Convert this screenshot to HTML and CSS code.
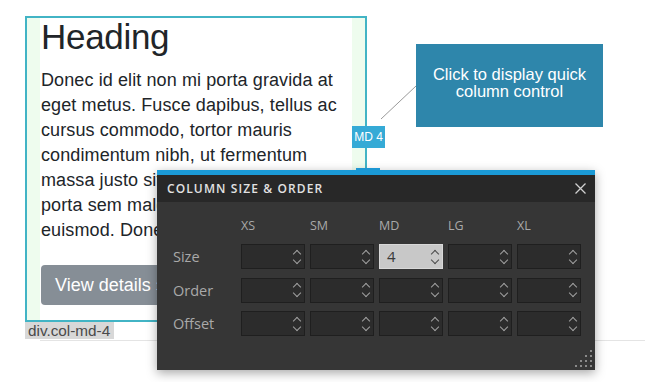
FILE: index.html
```html
<!DOCTYPE html>
<html>
<head>
<meta charset="utf-8">
<link rel="stylesheet" href="styles.css">
</head>
<body>
<div class="page">
  <div class="col">
    <div class="col-inner">
      <h2 class="heading">Heading</h2>
      <p class="text">Donec id elit non mi porta gravida at eget metus. Fusce dapibus, tellus ac cursus commodo, tortor mauris condimentum nibh, ut fermentum massa justo sit amet risus. Etiam porta sem malesuada magna mollis euismod. Donec sed odio dui.</p>
      <a class="btn">View details &raquo;</a>
    </div>
  </div>
  <span class="tag">div.col-md-4</span>
  <div class="rule"></div>

  <div class="badge">MD 4</div>
  <svg class="connector" width="40" height="40" viewBox="0 0 40 40"><line x1="1" y1="34" x2="36" y2="1" stroke="#9a9a9a" stroke-width="1"/></svg>
  <div class="callout">Click to display quick<br>column control</div>

  <div class="dialog">
    <div class="tab"></div>
    <div class="stripe"></div>
    <div class="dlg-head">
      <span class="dlg-title">COLUMN SIZE &amp; ORDER</span>
      <svg class="close" width="11" height="11" viewBox="0 0 11 11"><path d="M0.5 0.5 L10.5 10.5 M10.5 0.5 L0.5 10.5" stroke="#d0d0d0" stroke-width="1.3"/></svg>
    </div>
    <div class="dlg-body">
      <div class="grid">
        <span></span>
        <span class="colh">XS</span><span class="colh">SM</span><span class="colh">MD</span><span class="colh">LG</span><span class="colh">XL</span>

        <span class="rowh">Size</span>
        <div class="spin"></div><div class="spin"></div><div class="spin active">4</div><div class="spin"></div><div class="spin"></div>

        <span class="rowh">Order</span>
        <div class="spin"></div><div class="spin"></div><div class="spin"></div><div class="spin"></div><div class="spin"></div>

        <span class="rowh">Offset</span>
        <div class="spin"></div><div class="spin"></div><div class="spin"></div><div class="spin"></div><div class="spin"></div>
      </div>
      <div class="grip">
        <i class="d" style="grid-area:1/4"></i>
        <i class="d" style="grid-area:2/3"></i><i class="d" style="grid-area:2/4"></i>
        <i class="d" style="grid-area:3/2"></i><i class="d" style="grid-area:3/3"></i><i class="d" style="grid-area:3/4"></i>
        <i class="d" style="grid-area:4/1"></i><i class="d" style="grid-area:4/2"></i><i class="d" style="grid-area:4/3"></i><i class="d" style="grid-area:4/4"></i>
      </div>
    </div>
  </div>
</div>
</body>
</html>
```
FILE: styles.css
```css
html, body {
  margin: 0;
  padding: 0;
  background: #ffffff;
}
body {
  width: 645px;
  height: 382px;
  overflow: hidden;
  font-family: "Liberation Sans", Arial, sans-serif;
}
.page {
  position: relative;
  padding: 16px 0 0 25px;
  height: 366px;
}
.col {
  width: 342px;
  box-sizing: border-box;
  border: 2px solid #42b4c5;
  background: #eefcee;
  padding: 0 13px;
}
.col-inner {
  background: #ffffff;
  padding-bottom: 15px;
}
.heading {
  margin: 0;
  font-size: 35px;
  line-height: 38px;
  font-weight: 400;
  letter-spacing: -0.3px;
  color: #212529;
  padding-left: 1px;
}
.text {
  margin: 12px 0 0 1px;
  font-size: 18px;
  line-height: 25px;
  letter-spacing: 0.1px;
  color: #212529;
}
.btn {
  display: inline-block;
  margin: 22px 0 0 1px;
  height: 40px;
  line-height: 40px;
  padding: 0 14px;
  border-radius: 4px;
  background: #868e96;
  color: #ffffff;
  font-size: 18px;
}
.tag {
  display: inline-block;
  height: 17px;
  line-height: 17px;
  padding: 0 4px 0 3px;
  background: #d8d8d8;
  color: #4a4a4a;
  font-size: 15.3px;
  vertical-align: top;
}
.rule {
  margin-left: 15px;
  border-top: 1px solid #e4e4e4;
}

.badge {
  position: absolute;
  left: 352px;
  top: 126px;
  width: 33px;
  height: 22px;
  line-height: 22px;
  background: #35aad6;
  color: #ffffff;
  font-size: 12px;
  text-align: center;
}
.connector {
  position: absolute;
  left: 380px;
  top: 85px;
}
.callout {
  position: absolute;
  left: 416px;
  top: 44px;
  width: 187px;
  height: 83px;
  box-sizing: border-box;
  padding-top: 22px;
  background: #2e86ab;
  color: #ffffff;
  font-size: 16.5px;
  line-height: 16.5px;
  text-align: center;
}

.dialog {
  position: absolute;
  left: 157px;
  top: 170px;
  width: 438px;
  height: 200px;
  display: flex;
  flex-direction: column;
  background: #363636;
  box-shadow: 0 3px 10px rgba(0, 0, 0, 0.35);
  font-family: "Open Sans", "Noto Sans", sans-serif;
}
.tab {
  position: absolute;
  left: 199px;
  top: -2px;
  width: 24px;
  height: 2px;
  background: #1d97d3;
}
.stripe {
  height: 5px;
  background: #1b9ad6;
}
.dlg-head {
  height: 27px;
  background: #282828;
  display: flex;
  align-items: center;
  justify-content: space-between;
  padding: 0 9px 0 10px;
}
.dlg-title {
  color: #e2e2e2;
  font-size: 12px;
  letter-spacing: 1.1px;
  font-weight: 600;
}
.close {
  display: block;
}
.dlg-body {
  flex: 1;
  position: relative;
  padding: 13.5px 0 0 16px;
}
.grid {
  display: grid;
  grid-template-columns: 63px repeat(5, 64px);
  grid-template-rows: 20px 25px 25px 25px;
  column-gap: 5px;
  row-gap: 8.5px;
}
.colh {
  color: #a9a9a9;
  font-size: 12.5px;
  line-height: 20px;
}
.rowh {
  color: #a9a9a9;
  font-size: 14.5px;
  line-height: 25px;
}
.spin {
  position: relative;
  box-sizing: border-box;
  background: #2c2c2c;
  border: 1px solid #1f1f1f;
  color: #3a3a3a;
  font-size: 15px;
  line-height: 23px;
  padding-left: 7px;
}
.spin::before,
.spin::after {
  content: "";
  position: absolute;
  left: 51.5px;
  width: 6px;
  height: 6px;
  box-sizing: border-box;
  border: 0 solid #a0a0a0;
  transform: rotate(45deg);
}
.spin::before {
  top: 5.5px;
  border-top-width: 1.5px;
  border-left-width: 1.5px;
}
.spin::after {
  top: 11.8px;
  border-bottom-width: 1.5px;
  border-right-width: 1.5px;
}
.spin.active {
  background: #c8c8c8;
  border-color: #d8d8d8;
}
.spin.active::before,
.spin.active::after {
  border-color: #4a4a4a;
}
.grip {
  position: absolute;
  right: 3px;
  bottom: 3px;
  display: grid;
  grid-template-columns: repeat(4, 2px);
  grid-template-rows: repeat(4, 2px);
  gap: 3px;
}
.d {
  display: block;
  background: #8a8a8a;
}
```
